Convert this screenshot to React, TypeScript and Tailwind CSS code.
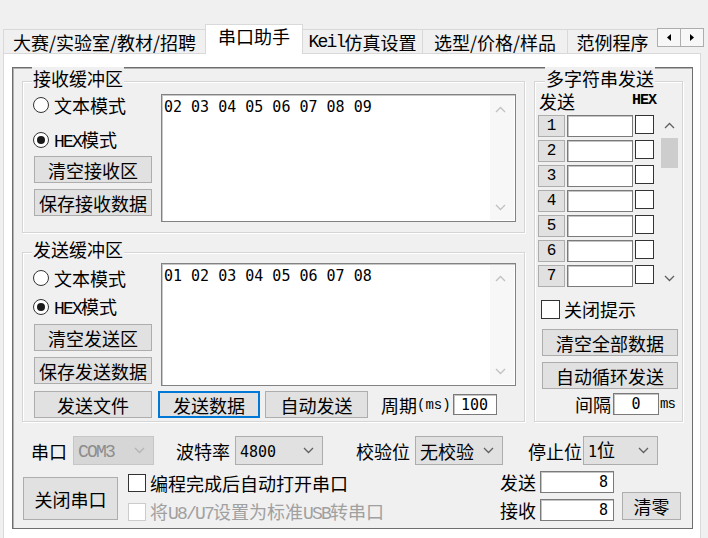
import React from "react";

type P = { className?: string; children?: React.ReactNode };

const Chev = ({ up = false, color = "#606060" }: { up?: boolean; color?: string }) => (
  <svg width="11" height="7" viewBox="0 0 11 7" className="block">
    <path
      d={up ? "M1 6 L5.5 1.5 L10 6" : "M1 1 L5.5 5.5 L10 1"}
      fill="none"
      stroke={color}
      strokeWidth="1.3"
    />
  </svg>
);

const Btn = ({ className = "", children }: P) => (
  <div className={"flex items-center justify-center bg-[#e1e1e1] border border-[#adadad] " + className}>
    {children}
  </div>
);

const Input = ({ className = "", children }: P) => (
  <div
    className={
      "flex items-center bg-white border border-[#7a7a7a] shadow-[inset_1px_1px_0_#c4c4c4] font-['DejaVu_Sans_Mono',monospace] text-[15px] " +
      className
    }
  >
    {children}
  </div>
);

const Radio = ({ checked = false, children }: { checked?: boolean; children?: React.ReactNode }) => (
  <div className="flex items-center h-[20px]">
    <div className="shrink-0 w-[16px] h-[16px] rounded-full border border-[#333333] bg-white flex items-center justify-center">
      {checked && <div className="w-[8px] h-[8px] rounded-full bg-[#1a1a1a]" />}
    </div>
    <div className="ml-[5px]">{children}</div>
  </div>
);

const Mono = ({ className = "", children }: P) => (
  <span className={"font-['Liberation_Mono',monospace] " + className}>{children}</span>
);

/* tall, narrow bitmap-like latin text */
const Narrow = ({ className = "", children }: P) => (
  <span className={"font-['Liberation_Mono',monospace] text-[18px] tracking-[-1.8px] " + className}>{children}</span>
);

const Group = ({
  label,
  labelLeft,
  className = "",
  children,
}: {
  label: string;
  labelLeft: string;
  className?: string;
  children?: React.ReactNode;
}) => (
  <div
    className={
      "relative border border-[#d5d5d5] shadow-[inset_1px_1px_0_#ffffff,1px_1px_0_#ffffff] " + className
    }
  >
    <div className={"absolute -top-[15px] px-[1px] bg-[#f0f0f0] " + labelLeft}>{label}</div>
    {children}
  </div>
);

const TextBox = ({ text, className = "" }: { text: string; className?: string }) => (
  <div className={"flex bg-white border border-[#828282] shadow-[inset_1px_1px_0_#c8c8c8] " + className}>
    <div className="flex-1 pl-[2px] pt-[3px] font-['DejaVu_Sans_Mono',monospace] text-[15px] leading-[18px] whitespace-pre">
      {text}
    </div>
    <div className="w-[24px] pr-[3px] my-[1px] mr-[1px] bg-[#f7f7f7] flex flex-col items-center justify-between pt-[10px] pb-[9px]">
      <Chev up color="#c1c1c1" />
      <Chev color="#c1c1c1" />
    </div>
  </div>
);

const Select = ({ className = "", disabled = false, children }: P & { disabled?: boolean }) => (
  <div
    className={
      "h-[29px] flex items-center justify-between pl-[4px] pr-[8px] border " +
      (disabled ? "bg-[#d6d6d6] border-[#c6c6c6] text-[#8d8d8d] " : "bg-[#e1e1e1] border-[#adadad] ") +
      className
    }
  >
    <span>{children}</span>
    <Chev color={disabled ? "#b4b4b4" : "#606060"} />
  </div>
);

const Check = ({ disabled = false, className = "" }: { disabled?: boolean; className?: string }) => (
  <div
    className={
      "shrink-0 w-[18px] h-[18px] bg-white border " + (disabled ? "border-[#cccccc] " : "border-[#333333] ") + className
    }
  />
);

export default function App() {
  const rows = [1, 2, 3, 4, 5, 6, 7];
  return (
    <div className="w-[708px] h-[538px] overflow-hidden bg-[#f0f0f0] pt-[24px] text-black text-[18px] leading-[22px] whitespace-nowrap font-['Noto_Sans_CJK_SC','Noto_Sans',sans-serif]">
      {/* tab strip */}
      <div className="flex items-end h-[29px] pl-[3px]">
        <div className="w-[202px] h-[24px] border-t border-l border-[#d9d9d9] flex items-center justify-center">
          大赛/实验室/教材/招聘
        </div>
        <div className="relative z-10 w-[98px] h-[30px] -mb-px bg-white border-t border-l border-r border-[#d9d9d9] flex justify-center">
          串口助手
        </div>
        <div className="w-[120px] h-[24px] border-t border-r border-[#d9d9d9] flex items-center justify-center">
          <Narrow className="tracking-[-1.2px]">Keil</Narrow>仿真设置
        </div>
        <div className="w-[145px] h-[24px] border-t border-r border-[#d9d9d9] flex items-center justify-center">
          选型/价格/样品
        </div>
        <div className="w-[89px] h-[24px] border-t border-[#d9d9d9] flex items-center justify-center overflow-hidden">
          范例程序
        </div>
        <div className="self-start mt-[4px] flex">
          <div className="w-[24px] h-[19px] border border-[#adadad] bg-[#f7f7f7] flex items-center justify-center">
            <svg width="4" height="7" viewBox="0 0 4 7">
              <path d="M4 0 L0 3.5 L4 7 Z" fill="#000" />
            </svg>
          </div>
          <div className="w-[23px] h-[19px] border border-l-0 border-[#adadad] bg-[#f7f7f7] flex items-center justify-center">
            <svg width="4" height="7" viewBox="0 0 4 7">
              <path d="M0 0 L4 3.5 L0 7 Z" fill="#000" />
            </svg>
          </div>
        </div>
      </div>

      {/* tab page */}
      <div className="ml-[3px] w-[698px] h-[485px] bg-white border-t border-l border-r border-[#d9d9d9] pl-[8px] pt-[13px]">
        <div className="w-[681px] h-[462px] bg-[#f0f0f0] border border-[#6e6e6e] shadow-[inset_1px_1px_0_#b0b0b0]">
          {/* groups */}
          <div className="flex pl-[9px] pt-[13px]">
            <div className="flex flex-col w-[503px]">
              {/* receive */}
              <Group label="接收缓冲区" labelLeft="left-[9px]" className="w-[503px] h-[152px]">
                <div className="flex">
                  <div className="ml-[10px] w-[128px] flex flex-col">
                    <div className="mt-[13px]">
                      <Radio>文本模式</Radio>
                    </div>
                    <div className="mt-[15px]">
                      <Radio checked>
                        <Narrow>HEX</Narrow>模式
                      </Radio>
                    </div>
                    <Btn className="mt-[6px] ml-[1px] w-[118px] h-[27px]">清空接收区</Btn>
                    <Btn className="mt-[6px] ml-[1px] w-[118px] h-[27px]">保存接收数据</Btn>
                  </div>
                  <TextBox className="mt-[12px] w-[355px] h-[128px]" text="02 03 04 05 06 07 08 09" />
                </div>
              </Group>

              {/* send */}
              <Group label="发送缓冲区" labelLeft="left-[9px]" className="mt-[19px] w-[503px] h-[170px]">
                <div className="flex">
                  <div className="ml-[10px] w-[128px] flex flex-col">
                    <div className="mt-[15px]">
                      <Radio>文本模式</Radio>
                    </div>
                    <div className="mt-[9px]">
                      <Radio checked>
                        <Narrow>HEX</Narrow>模式
                      </Radio>
                    </div>
                    <Btn className="mt-[7px] ml-[1px] w-[118px] h-[27px]">清空发送区</Btn>
                    <Btn className="mt-[6px] ml-[1px] w-[118px] h-[27px]">保存发送数据</Btn>
                  </div>
                  <TextBox className="mt-[10px] w-[355px] h-[123px]" text="01 02 03 04 05 06 07 08" />
                </div>
                <div className="flex items-center mt-[5px] ml-[11px] h-[27px]">
                  <Btn className="w-[118px] h-[27px]">发送文件</Btn>
                  <div className="ml-[6px] w-[102px] h-[27px] bg-[#e1e1e1] border-2 border-[#0078d7] flex items-center justify-center">
                    发送数据
                  </div>
                  <Btn className="ml-[5px] w-[103px] h-[27px]">自动发送</Btn>
                  <div className="ml-[13px] flex items-center">
                    周期<Mono className="text-[14px]">(ms)</Mono>
                  </div>
                  <Input className="ml-[2px] w-[44px] h-[21px] justify-center">100</Input>
                </div>
              </Group>
            </div>

            {/* multi string */}
            <Group label="多字符串发送" labelLeft="left-[10px]" className="ml-[9px] w-[149px] h-[341px]">
              <div className="flex items-center h-[22px] mt-[8px] pl-[4px]">
                <span>发送</span>
                <Mono className="ml-[57px] text-[15px] tracking-[-1px] font-bold">HEX</Mono>
              </div>
              <div className="flex mt-[3px] pl-[3px]">
                <div className="flex flex-col gap-[3px]">
                  {rows.map((n) => (
                    <div key={n} className="flex h-[22px]">
                      <Btn className="w-[27px] h-[22px] font-['Liberation_Mono',monospace] text-[16px]">{n}</Btn>
                      <Input className="ml-[2px] w-[66px] h-[22px]" />
                      <div className="ml-[2px] w-[19px] h-[19px] border border-[#333333] bg-white" />
                    </div>
                  ))}
                </div>
                <div className="ml-[5px] w-[20px] h-[172px] flex flex-col items-center">
                  <div className="mt-[7px]">
                    <Chev up />
                  </div>
                  <div className="mt-[9px] w-[17px] h-[30px] bg-[#cdcdcd]" />
                  <div className="mt-auto mb-[5px]">
                    <Chev />
                  </div>
                </div>
              </div>
              <div className="flex items-center h-[22px] mt-[11px] pl-[6px]">
                <div className="w-[19px] h-[19px] border border-[#333333] bg-white" />
                <span className="ml-[4px]">关闭提示</span>
              </div>
              <Btn className="mt-[9px] ml-[7px] w-[136px] h-[27px]">清空全部数据</Btn>
              <Btn className="mt-[6px] ml-[7px] w-[136px] h-[27px]">自动循环发送</Btn>
              <div className="flex items-center mt-[3px] h-[23px] pl-[40px]">
                <span>间隔</span>
                <Input className="ml-[2px] w-[46px] h-[22px] justify-center">0</Input>
                <Mono className="ml-[1px] text-[14px] tracking-[-1px]">ms</Mono>
              </div>
            </Group>
          </div>

          {/* port settings */}
          <div className="flex items-center h-[29px] mt-[14px] pl-[18px]">
            <span>串口</span>
            <Select disabled className="ml-[6px] w-[81px]">
              <Narrow>COM3</Narrow>
            </Select>
            <span className="ml-[22px]">波特率</span>
            <Select className="ml-[5px] w-[88px]">
              <span className="font-['DejaVu_Sans_Mono',monospace] text-[15px]">4800</span>
            </Select>
            <span className="ml-[33px]">校验位</span>
            <Select className="ml-[5px] w-[88px]">无校验</Select>
            <span className="ml-[25px]">停止位</span>
            <Select className="ml-[1px] w-[75px]">
              <span className="font-['DejaVu_Sans_Mono',monospace] text-[15px]">1</span>位
            </Select>
          </div>

          <div className="flex items-start mt-[6px] pl-[10px]">
            <Btn className="mt-[6px] w-[95px] h-[43px]">关闭串口</Btn>
            <div className="ml-[10px] w-[372px] flex flex-col">
              <div className="flex items-center h-[22px] mt-[1px]">
                <Check />
                <span className="ml-[4px]">编程完成后自动打开串口</span>
              </div>
              <div className="flex items-center h-[22px] mt-[7px] text-[#a0a0a0]">
                <Check disabled />
                <span className="ml-[4px]">
                  将<Narrow>U8/U7</Narrow>设置为标准<Narrow>USB</Narrow>转串口
                </span>
              </div>
            </div>
            <div className="flex flex-col">
              <div className="flex items-center h-[22px]">
                <span>发送</span>
                <Input className="ml-[4px] w-[74px] h-[22px] justify-end pr-[5px]">8</Input>
              </div>
              <div className="flex items-center h-[22px] mt-[6px]">
                <span>接收</span>
                <Input className="ml-[4px] w-[74px] h-[22px] justify-end pr-[5px]">8</Input>
              </div>
            </div>
            <Btn className="ml-[8px] mt-[21px] w-[59px] h-[28px]">清零</Btn>
          </div>
        </div>
      </div>
    </div>
  );
}
